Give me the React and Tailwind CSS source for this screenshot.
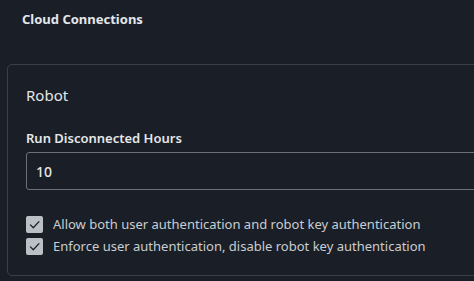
import React from "react";

function Check() {
  return (
    <span className="flex h-[17px] w-[17px] shrink-0 items-center justify-center rounded-[2px] bg-[#b9c0c6]">
      <svg width="13" height="13" viewBox="0 0 16 16" fill="none">
        <path d="M3 8.5 L6.5 12 L13.5 4.5" stroke="#1c222a" strokeWidth="1.6" strokeLinecap="round" strokeLinejoin="round" />
      </svg>
    </span>
  );
}

export default function App() {
  return (
    <div
      className="h-[281px] w-[474px] overflow-hidden bg-[#1a1f27] text-[#e4e7ea]"
      style={{ fontFamily: '"Noto Sans", "Open Sans", sans-serif' }}
    >
      <div className="pl-[22px] pt-[9px] text-[13px] font-bold leading-[20px]">Cloud Connections</div>
      <div className="ml-[7px] mt-[35px] mr-[-20px] h-[212px] rounded-[5px] border border-[#3b4048] pl-[18px] pt-[19px]">
        <div className="text-[15px] leading-[22px]">Robot</div>
        <div className="mt-[22px] text-[13px] font-semibold leading-[20px]">Run Disconnected Hours</div>
        <div className="mt-[4px] flex h-[38px] items-center rounded-[3px] border border-[#6a7077] pl-[9px] text-[14px] font-medium">
          10
        </div>
        <div className="mt-[26px] flex flex-col gap-[5px] text-[13px] text-[#c9cdd1]">
          <label className="flex items-center gap-[10px] leading-[17px]">
            <Check />
            <span>Allow both user authentication and robot key authentication</span>
          </label>
          <label className="flex items-center gap-[10px] leading-[17px]">
            <Check />
            <span>Enforce user authentication, disable robot key authentication</span>
          </label>
        </div>
      </div>
    </div>
  );
}
